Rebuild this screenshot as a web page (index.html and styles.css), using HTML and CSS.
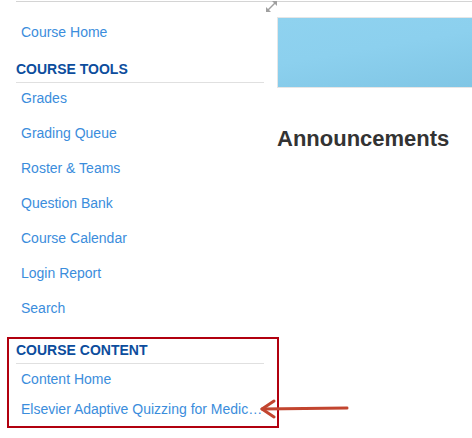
FILE: index.html
```html
<!DOCTYPE html>
<html>
<head>
    <meta charset="UTF-8">
    <title>Course Home</title>
    <link rel="stylesheet" href="styles.css">
</head>
<body class="body">
<div class="page">
    <nav class="sidebar">
        <div class="navitem home"><a href="#">Course Home</a></div>

        <div class="section">
            <div class="section-title">COURSE TOOLS</div>
            <ul class="links">
                <li><a href="#">Grades</a></li>
                <li><a href="#">Grading Queue</a></li>
                <li><a href="#">Roster &amp; Teams</a></li>
                <li><a href="#">Question Bank</a></li>
                <li><a href="#">Course Calendar</a></li>
                <li><a href="#">Login Report</a></li>
                <li><a href="#">Search</a></li>
            </ul>
        </div>

        <div class="section content">
            <div class="callout"></div>
            <div class="section-title">COURSE CONTENT</div>
            <ul class="links">
                <li><a href="#">Content Home</a></li>
                <li><a href="#">Elsevier Adaptive Quizzing for Medical-Surgical Nursing</a></li>
            </ul>
            <svg class="pointer" width="92" height="20" viewBox="0 0 92 20">
                <path d="M3 10 L88 9" stroke="#c2452f" stroke-width="3" fill="none" stroke-linecap="round"/>
                <path d="M15 2 L3 10 L15 18" stroke="#c2452f" stroke-width="3" fill="none" stroke-linecap="round" stroke-linejoin="round"/>
            </svg>
        </div>
    </nav>

    <div class="splitter">
        <svg width="13" height="13" viewBox="0 0 13 13">
            <path d="M2 11 L11 2" stroke="#a0a0a0" stroke-width="1.5"/>
            <path d="M1 7 L1 12 L6 12 Z" fill="#a0a0a0"/>
            <path d="M7 1 L12 1 L12 6 Z" fill="#a0a0a0"/>
        </svg>
    </div>

    <main class="main">
        <div class="banner"></div>
        <h2 class="title">Announcements</h2>
    </main>
</div>
</body>
</html>
```

FILE: styles.css
```css
.body{
    margin:0px;
    font-family: "Liberation Sans", Arial, sans-serif;
    background:#fff;
    overflow:hidden;
}
.page{
    display:flex;
    margin:1px 0 0 16px;
    border-top:1px solid #d4d4d4;
}

.sidebar{
    width:248px; flex:none;
    padding-top:20px;
}
a{
    color:#3b8ddc; text-decoration:none;
    font-size:14px;
}
.navitem{
    line-height:20px; padding-left:5px;
}

.section{
    margin-top:17px;
}
/* last link's bottom margin collapses with this one */
.section.content{
    margin-top:22px;
    position:relative;
}
.section-title{
    font-size:14px; font-weight:bold; color:#0c4d9d;
    line-height:20px; padding-bottom:3px;
    border-bottom:1px solid #e0e0e0;
}
.links{
    list-style:none; margin:0; padding:5px 0 0 0;
}
.links li{
    line-height:20px; margin-bottom:15px; padding-left:5px;
    white-space:nowrap; overflow:hidden; text-overflow:ellipsis;
    color:#3b8ddc; font-size:14px;
}
.content .links li{
    margin-bottom:10px;
}

/* annotation drawn over the sidebar */
.callout{
    position:absolute; left:-9px; top:-3px;
    width:268px; height:87px;
    border:2px solid #b1000f;
    pointer-events:none;
}
.pointer{
    position:absolute; left:243px; top:59px;
}

.splitter{
    width:13px; flex:none;
}
.splitter svg{
    display:block; margin:-2px 0 0 1px;
}

.main{
    flex:1; min-width:0;
}
.banner{
    margin-top:15px; height:69px;
    border:1px solid #e6e6e6; border-right:none;
    background:linear-gradient(170deg, #8fd2ef 0%, #8cd0ee 45%, #80c6e5 100%);
}
.title{
    margin:38px 0 0 0;
    font-size:22px; line-height:26px; font-weight:bold;
    color:#333;
}
```
